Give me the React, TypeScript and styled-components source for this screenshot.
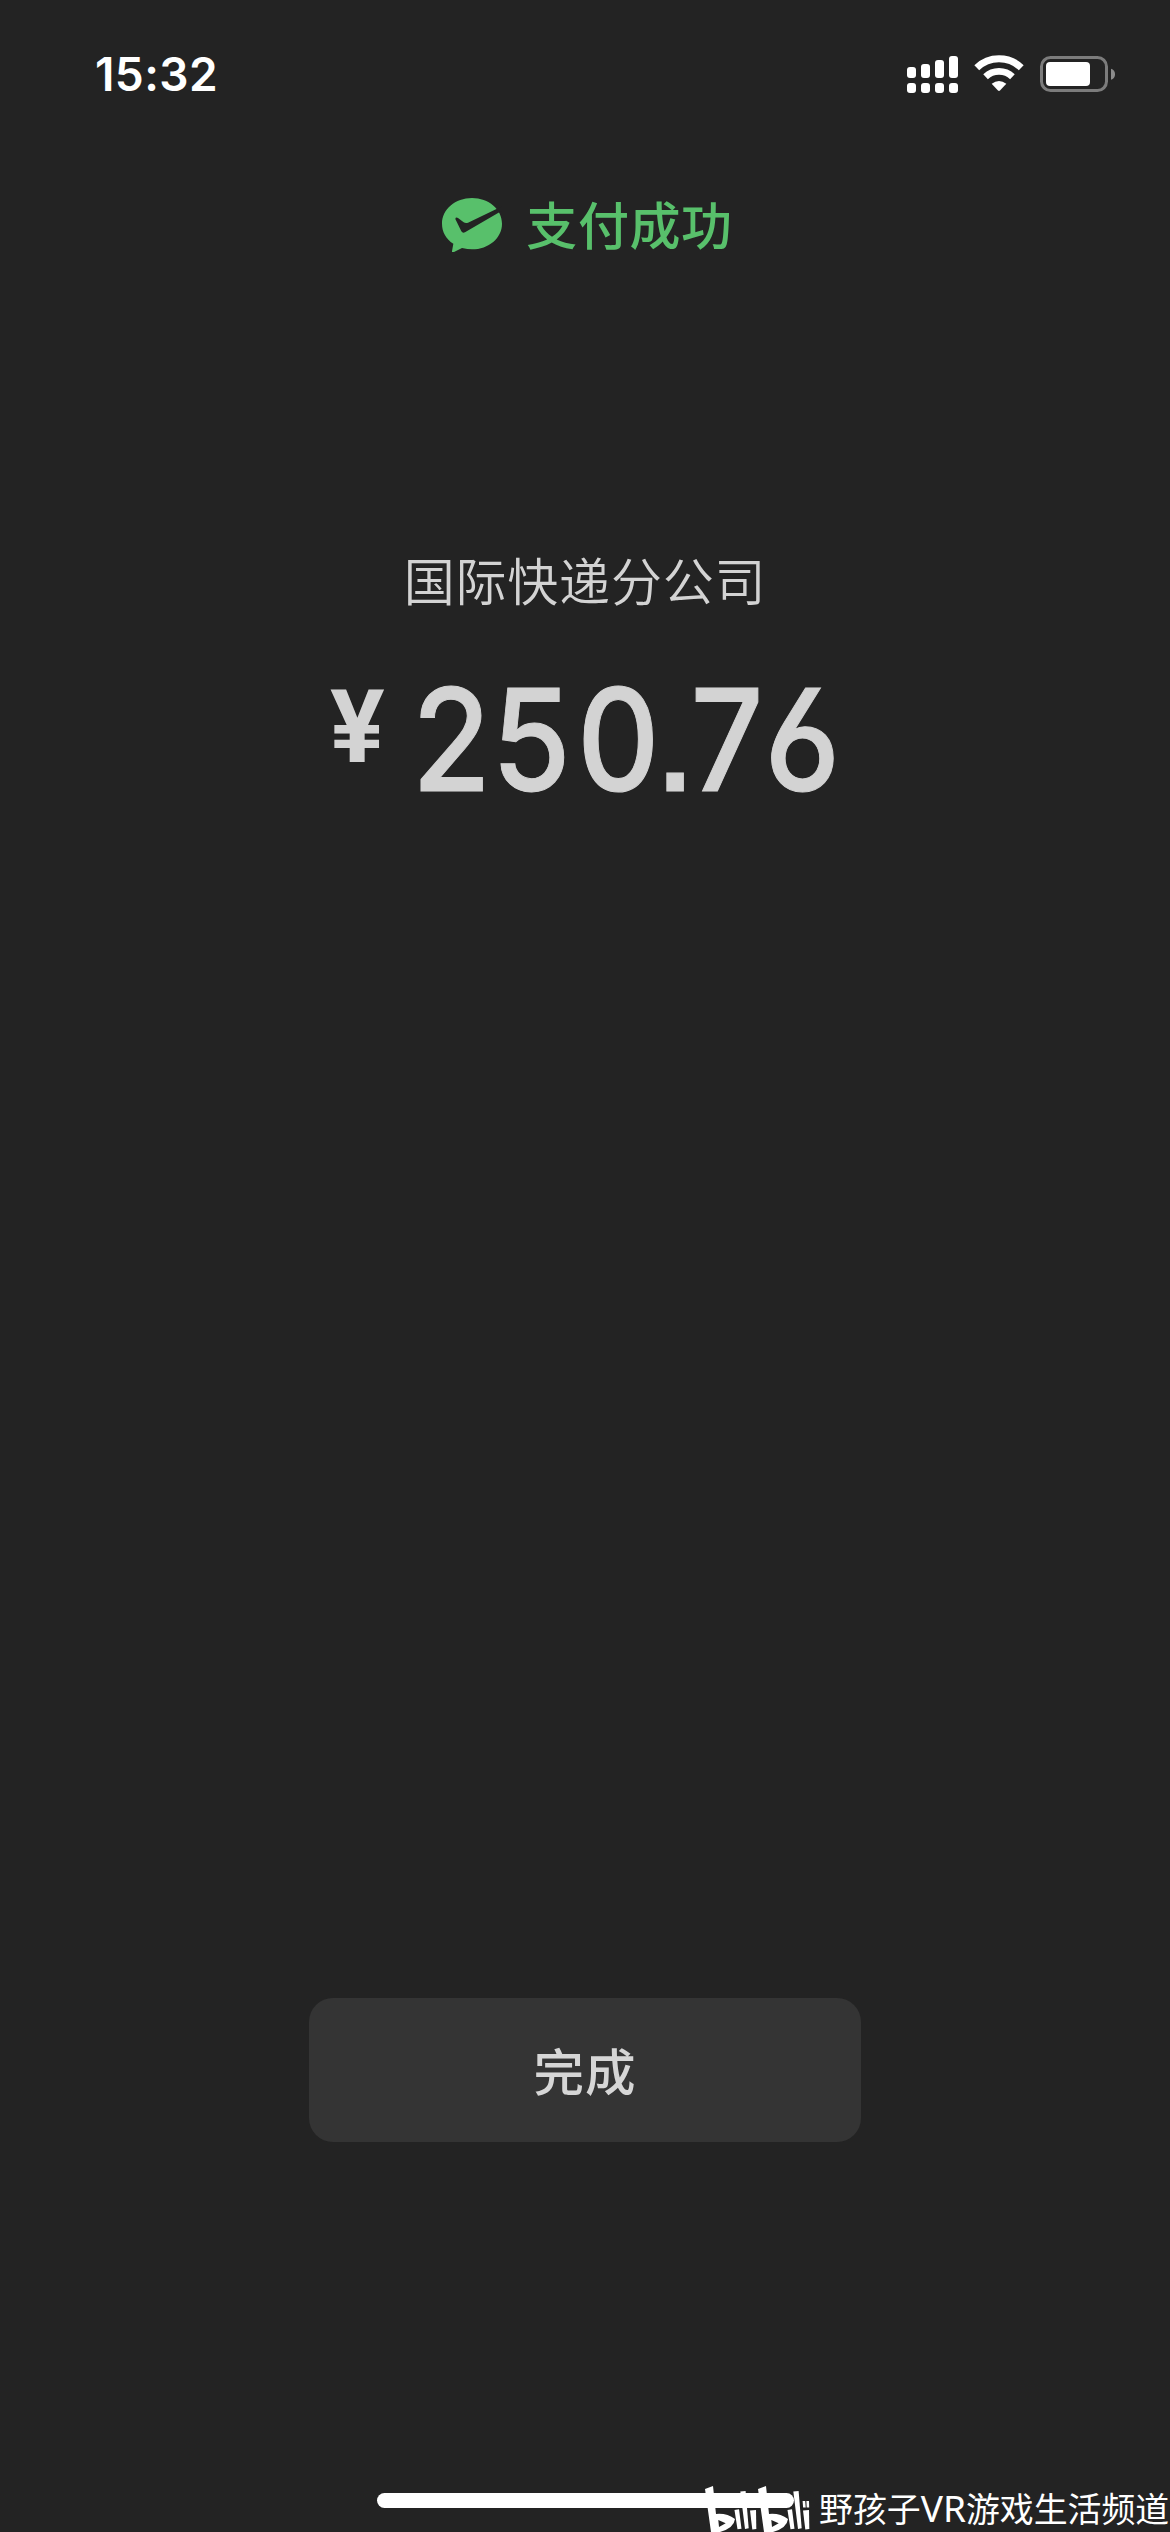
import React from "react";
import styled, { createGlobalStyle } from "styled-components";

const GlobalStyle = createGlobalStyle`
  * { box-sizing: border-box; }
  body { margin: 0; background: #232323; }
`;

const cjk = `"Noto Sans CJK SC", "Noto Sans", sans-serif`;

const Screen = styled.main`
  width: 1170px;
  height: 2532px;
  overflow: hidden;
  position: relative;
  display: flex;
  flex-direction: column;
  align-items: center;
  background: #232323;
  color: #d3d3d3;
  font-family: ${cjk};
`;

const StatusBar = styled.header`
  width: 100%;
  height: 148px;
  padding: 0 55px 0 95px;
  display: flex;
  justify-content: space-between;
  align-items: center;
  color: #fff;
`;

const Clock = styled.time`
  font: 600 46px/56px Inter, sans-serif;
  letter-spacing: 0.4px;
`;

const StatusIcons = styled.svg`
  width: 208px;
  height: 38px;
  display: block;
`;

const Result = styled.div`
  height: 80px;
  margin-top: 37px;
  padding-left: 5px;
  display: flex;
  align-items: center;
  gap: 24px;
  color: #58c06b;
`;

const ResultText = styled.span`
  height: 84px;
  font-size: 51px;
  font-weight: 500;
  line-height: 81px;
  letter-spacing: 0.6px;
`;

const ResultIcon = styled.svg`
  width: 60px;
  height: 54.7px;
`;

const Payee = styled.h1`
  margin: 274px 0 0;
  font-size: 51px;
  font-weight: 350;
  line-height: 80px;
  letter-spacing: 0.8px;
`;

const Amount = styled.div`
  display: flex;
  align-items: flex-start;
  width: 510px;
  height: 170px;
  margin-top: 35px;
`;

const Currency = styled.span`
  flex: none;
  width: 82px;
  padding-top: 13px;
  font-family: Roboto, sans-serif;
  font-size: 102px;
  font-weight: 700;
  line-height: 120px;
`;

const Digits = styled.span`
  flex: none;
  font-family: Inter, sans-serif;
  font-size: 142px;
  font-weight: 500;
  font-kerning: none;
  font-feature-settings: "ss01", "ss07";
  line-height: 170px;
  white-space: nowrap;
  -webkit-text-stroke: 1px currentColor;
  transform: scaleX(0.9);
  transform-origin: left center;
`;

const Digit = styled.span<{ $after: number }>`
  letter-spacing: ${(p) => p.$after}px;
`;

const DoneButton = styled.button`
  width: 552px;
  height: 144px;
  margin-top: 1174px;
  padding: 0 0 2px;
  border: 0;
  border-radius: 24px;
  background: #343434;
  color: #d6d6d6;
  font-family: ${cjk};
  font-size: 50.5px;
  font-weight: 500;
  letter-spacing: 1px;
`;

const HomeIndicator = styled.div`
  width: 417px;
  height: 15px;
  margin-top: 351px;
  border-radius: 8px;
  background: #fff;
`;

const Watermark = styled.div`
  position: absolute;
  right: 0;
  bottom: 0;
  height: 52px;
  display: flex;
  align-items: center;
  color: #fff;
  white-space: nowrap;
`;

const Channel = styled.span`
  width: 351px;
  padding-top: 3px;
  font-size: 33.9px;
  line-height: 49px;
`;

const Latin = styled.span`
  font-family: "Noto Sans", sans-serif;
  font-size: 37px;
  line-height: 1;
`;

const Logo = styled.svg`
  width: 115px;
  height: 52px;
  margin-right: 4px;
`;

const amountGlyphs: [string, number][] = [
  ["2", 1],
  ["5", 7],
  ["0", -4],
  [".", -4.5],
  ["7", 1],
  ["6", 0],
];

const signalBars = [
  { x: 51, y: 81 },
  { x: 93, y: 72 },
  { x: 135, y: 60 },
  { x: 177, y: 48 },
];

function LogoHalf({ x }: { x: number }) {
  return (
    <g transform={`translate(${x} 0)`}>
      <path
        fillRule="evenodd"
        d="M5 9 13 6 16 34Q27 33 35 39Q34 48 20 52H11ZM18.3 40 19 47 25.7 43.3Z"
      />
      <path d="M34.5 30 39 29.3 41.5 48.7 37.5 49.3Z" />
      <path d="M40.3 11.5 45.6 11 48.7 48.3 45 49Z" />
      <path d="M50 30.6 56 30 56.3 49 52.3 49.4Z" />
      <path d="M49.6 21h2.6l.5 6.4h-2.6ZM53.4 21h2.6l.2 6.4h-2.5Z" />
    </g>
  );
}

export default function App() {
  return (
    <Screen>
      <GlobalStyle />
      <StatusBar>
        <Clock>15:32</Clock>
        <StatusIcons viewBox="51 45 624 114" fill="#fff">
          {signalBars.map((b) => (
            <g key={b.x}>
              <rect x={b.x} y={b.y} width="27" height={114 - b.y} rx="9" />
              <rect x={b.x} y="129" width="27" height="30" rx="9" />
            </g>
          ))}
          <g fill="none" stroke="#fff">
            <path d="M260.3 83A96 96 0 0 1 393.7 83" strokeWidth="21" />
            <path d="M286.7 110.3A58 58 0 0 1 367.3 110.3" strokeWidth="20" />
          </g>
          <path d="M305 131.5Q327 114 349 131.5L330 151.5Q327 154 324 151.5Z" />
          <rect x="454.5" y="52.5" width="195" height="99" rx="27" fill="none" stroke="#7c7c7c" strokeWidth="9" />
          <rect x="468" y="66" width="132" height="72" rx="12" />
          <path d="M663 86Q675 90 675 102.500T663 119Z" fill="#8c8c8c" />
        </StatusIcons>
      </StatusBar>
      <Result>
        <ResultIcon viewBox="15 17 180 164">
          <path
            fill="#58c06b"
            d="M105 17C155 17 195 51 195 94S155 171 105 171Q92 171 75 167L49 180Q44 182 45 177L49 154C27 140 15 119 15 94C15 51 55 17 105 17Z"
          />
          <path
            fill="#232323"
            d="M55 80Q56 73 63 77L80 90Q86 94 93 91L180 49 198 40V54L187 60 84 120Q77 124 73 117Z"
          />
        </ResultIcon>
        <ResultText>支付成功</ResultText>
      </Result>
      <Payee>国际快递分公司</Payee>
      <Amount>
        <Currency>¥</Currency>
        <Digits>
          {amountGlyphs.map(([glyph, after], i) => (
            <Digit key={i} $after={after}>
              {glyph}
            </Digit>
          ))}
        </Digits>
      </Amount>
      <DoneButton>完成</DoneButton>
      <HomeIndicator />
      <Watermark>
        <Logo viewBox="0 0 115 52" fill="#fff">
          <LogoHalf x={0} />
          <LogoHalf x={53} />
        </Logo>
        <Channel>
          野孩子<Latin>VR</Latin>游戏生活频道
        </Channel>
      </Watermark>
    </Screen>
  );
}
